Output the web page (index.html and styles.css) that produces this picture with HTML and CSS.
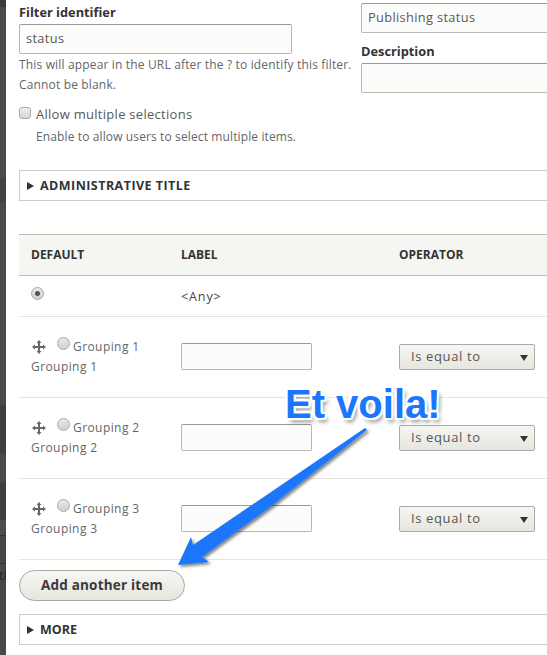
FILE: index.html
```html
<!DOCTYPE html>
<html lang="en">
<head>
<meta charset="utf-8">
<title>Filter options</title>
<link rel="stylesheet" href="styles.css">
</head>
<body>
<div class="strip"><span class="strip-text">th</span></div>
<main class="page">
  <section class="top">
    <div class="col-left">
      <label class="lbl">Filter identifier</label>
      <div class="input wide">status</div>
      <p class="hint first">This will appear in the URL after the ? to identify this filter.</p>
      <p class="hint">Cannot be blank.</p>
      <div class="check-row"><span class="checkbox"></span><span class="check-label">Allow multiple selections</span></div>
      <p class="hint indent">Enable to allow users to select multiple items.</p>
    </div>
    <div class="col-right">
      <div class="input full">Publishing status</div>
      <label class="lbl desc">Description</label>
      <div class="input full"></div>
    </div>
  </section>
  <details class="box admin"><summary><span class="tri"></span>ADMINISTRATIVE TITLE</summary></details>
  <table class="grid">
    <thead>
      <tr><th class="c1">DEFAULT</th><th class="c2">LABEL</th><th class="c3">OPERATOR</th></tr>
    </thead>
    <tbody>
      <tr class="any"><td class="c1"><span class="radio on"></span></td><td class="c2 any-label">&lt;Any&gt;</td><td class="c3"></td></tr>
      <tr class="item">
        <td class="c1">
          <div class="line"><svg class="move" viewBox="0 0 14 14"><path d="M7 0 9.4 3H8V6H11V4.6L14 7 11 9.4V8H8V11H9.4L7 14 4.6 11H6V8H3V9.4L0 7 3 4.6V6H6V3H4.6Z"/></svg><span class="radio"></span><span>Grouping 1</span></div>
          <div class="line2">Grouping 1</div>
        </td>
        <td class="c2"><div class="input cell"></div></td>
        <td class="c3"><div class="select">Is equal to<span class="arrow"></span></div></td>
      </tr>
      <tr class="item">
        <td class="c1">
          <div class="line"><svg class="move" viewBox="0 0 14 14"><path d="M7 0 9.4 3H8V6H11V4.6L14 7 11 9.4V8H8V11H9.4L7 14 4.6 11H6V8H3V9.4L0 7 3 4.6V6H6V3H4.6Z"/></svg><span class="radio"></span><span>Grouping 2</span></div>
          <div class="line2">Grouping 2</div>
        </td>
        <td class="c2"><div class="input cell"></div></td>
        <td class="c3"><div class="select">Is equal to<span class="arrow"></span></div></td>
      </tr>
      <tr class="item">
        <td class="c1">
          <div class="line"><svg class="move" viewBox="0 0 14 14"><path d="M7 0 9.4 3H8V6H11V4.6L14 7 11 9.4V8H8V11H9.4L7 14 4.6 11H6V8H3V9.4L0 7 3 4.6V6H6V3H4.6Z"/></svg><span class="radio"></span><span>Grouping 3</span></div>
          <div class="line2">Grouping 3</div>
        </td>
        <td class="c2"><div class="input cell"></div></td>
        <td class="c3"><div class="select">Is equal to<span class="arrow"></span></div></td>
      </tr>
    </tbody>
  </table>
  <button class="btn" type="button">Add another item</button>
  <details class="box more"><summary><span class="tri"></span>MORE</summary></details>
</main>
<svg class="arrow-note" viewBox="0 0 547 655" aria-hidden="true">
  <defs><filter id="sh" x="-20%" y="-20%" width="140%" height="140%"><feDropShadow dx="2" dy="2" stdDeviation="1.8" flood-color="#000" flood-opacity=".5"/></filter></defs>
  <path filter="url(#sh)" fill="#1a76fb" d="M365 428 193 545 191 537 178 565 209 562 202 557 270 507 367 430Z"/>
</svg>
<div class="voila">Et voila!</div>
</body>
</html>
```
FILE: styles.css
```css
* { box-sizing: border-box; }
html, body { margin: 0; height: 655px; overflow: hidden; background: #fff; }
body {
  position: relative;
  font-family: "Open Sans", sans-serif;
  font-size: 12px;
  color: #555;
}
.strip {
  position: absolute; left: 0; top: 0; width: 6px; height: 655px; overflow: hidden;
  background: linear-gradient(#3a3a3a 0 7px, #4a4a4a 7px 178px, #424242 178px 202px, #4a4a4a 202px 405px, #3f3f3c 405px 454px, #4a4a4a 454px 482px, #3f3f3c 482px 520px, #4c4c4c 520px 535px, #333 535px 536px, #454545 536px 563px, #333 563px 564px, #484848 564px);
}
.strip-text { position: absolute; left: -1px; top: 566px; color: #222; font-size: 13px; line-height: 18px; }
.page { padding: 0 0 0 19px; width: 560px; }
.top { display: flex; height: 170px; }
.col-left { flex: none; width: 342px; padding-top: 4px; }
.col-right { flex: none; width: 200px; padding-top: 3px; }
.lbl { display: block; font-weight: 700; font-size: 12.8px; line-height: 17px; color: #333; }
.input {
  height: 30px; border: 1px solid #b8b8b0; border-radius: 2px; background: #fcfcfa;
  border-top-color: #999; font-size: 12.8px; line-height: 27px; padding: 0 6px; color: #595959; letter-spacing: .35px;
}
.wide { width: 273px; margin-top: 3px; }
.full { width: 200px; }
.desc { margin: 10px 0 3px; line-height: 17px; }
.hint { margin: 0; font-size: 12px; line-height: 20px; color: #666; letter-spacing: .16px; white-space: nowrap; }
.first { margin-top: 1px; }
.check-row { display: flex; align-items: center; gap: 5px; margin-top: 9px; height: 20px; }
.checkbox {
  width: 12px; height: 12px; border: 1px solid #aaa; border-radius: 3px; background: linear-gradient(#eee, #d5d5d5); margin-top: -2px;
}
.check-label { font-size: 13px; color: #595959; letter-spacing: .28px; }
.indent { margin-left: 17px; margin-top: 3px; letter-spacing: .12px; }
.box { border: 1px solid #ccc; height: 31px; width: 540px; background: #fff; }
.box summary { list-style: none; display: flex; align-items: center; height: 29px; padding-left: 7px; font-weight: 700; font-size: 12.5px; color: #333; }
.box summary::-webkit-details-marker { display: none; }
.admin summary { letter-spacing: .46px; }
.tri { width: 0; height: 0; border-left: 7px solid #333; border-top: 4px solid transparent; border-bottom: 4px solid transparent; margin-right: 6px; }
.grid { border-collapse: collapse; margin-top: 33px; width: 540px; table-layout: fixed; }
.grid th { height: 41px; background: #f5f5f2; border-top: 1px solid #bfbeb5; border-bottom: 1px solid #bfbeb5; text-align: left; font-size: 12px; font-weight: 700; color: #333; padding: 0 0 2px; }
.grid td { padding: 0; border-bottom: 1px solid #e6e4df; vertical-align: top; }
.c1 { width: 162px; padding-left: 12px !important; }
.c2 { width: 218px; }
.c3 { width: 160px; }
.any td { height: 41px; }
.any .radio { display: block; margin-top: 11px; margin-left: 0; }
.any-label { font-size: 12.5px; color: #444; padding-top: 12px !important; letter-spacing: .9px; }
.item td { height: 81px; }
.line { display: flex; align-items: center; margin-top: 19px; height: 20px; font-size: 12px; color: #666; white-space: nowrap; letter-spacing: .42px; }
.line2 { font-size: 12px; line-height: 20px; margin-top: 1px; color: #666; white-space: nowrap; letter-spacing: .42px; }
.move { width: 14px; height: 14px; fill: #666; margin: 1px 11px 0 1px; }
.radio { display: inline-block; width: 13px; height: 13px; border-radius: 50%; border: 1px solid #aaa; background: linear-gradient(#e8e8e8, #d0d0d0); margin-right: 3px; margin-top: -5px; flex: none; position: relative; }
.radio.on::after { content: ""; position: absolute; left: 3px; top: 3px; width: 5px; height: 5px; border-radius: 50%; background: #555; }
.cell { width: 131px; height: 27px; margin-top: 26px; }
.select {
  position: relative; width: 136px; height: 26px; margin-top: 27px; border: 1px solid #aaa; border-radius: 2px;
  background: linear-gradient(#f6f6f2, #e6e6df); font-size: 13px; line-height: 22px; padding-left: 11px; color: #555; letter-spacing: .62px;
}
.arrow { position: absolute; right: 6px; top: 10px; width: 0; height: 0; border-top: 6px solid #333; border-left: 4px solid transparent; border-right: 4px solid transparent; }
.btn {
  display: block; margin: 10px 0 13px; width: 166px; height: 31px; border: 1px solid #a8a89e; border-radius: 16px;
  background: linear-gradient(#f6f6f3, #e6e6df); font: 700 13.5px "Open Sans", sans-serif; color: #3a3a3a; padding: 0 0 2px; letter-spacing: .2px;
}
.arrow-note { position: absolute; left: 0; top: 0; width: 547px; height: 655px; pointer-events: none; }
.voila {
  position: absolute; left: 285px; top: 381px; font: 700 40px/46px "Liberation Sans", sans-serif; color: #1a76fb; white-space: nowrap;
  text-shadow: 0 0 2px #fff, 2px 0 1px #fff, -2px 0 1px #fff, 0 2px 1px #fff, 0 -2px 1px #fff, 2px 2px 1px #fff, -2px -2px 1px #fff, 2px -2px 1px #fff, -2px 2px 1px #fff, 3px 4px 4px rgba(0,0,0,.45);
}
```
